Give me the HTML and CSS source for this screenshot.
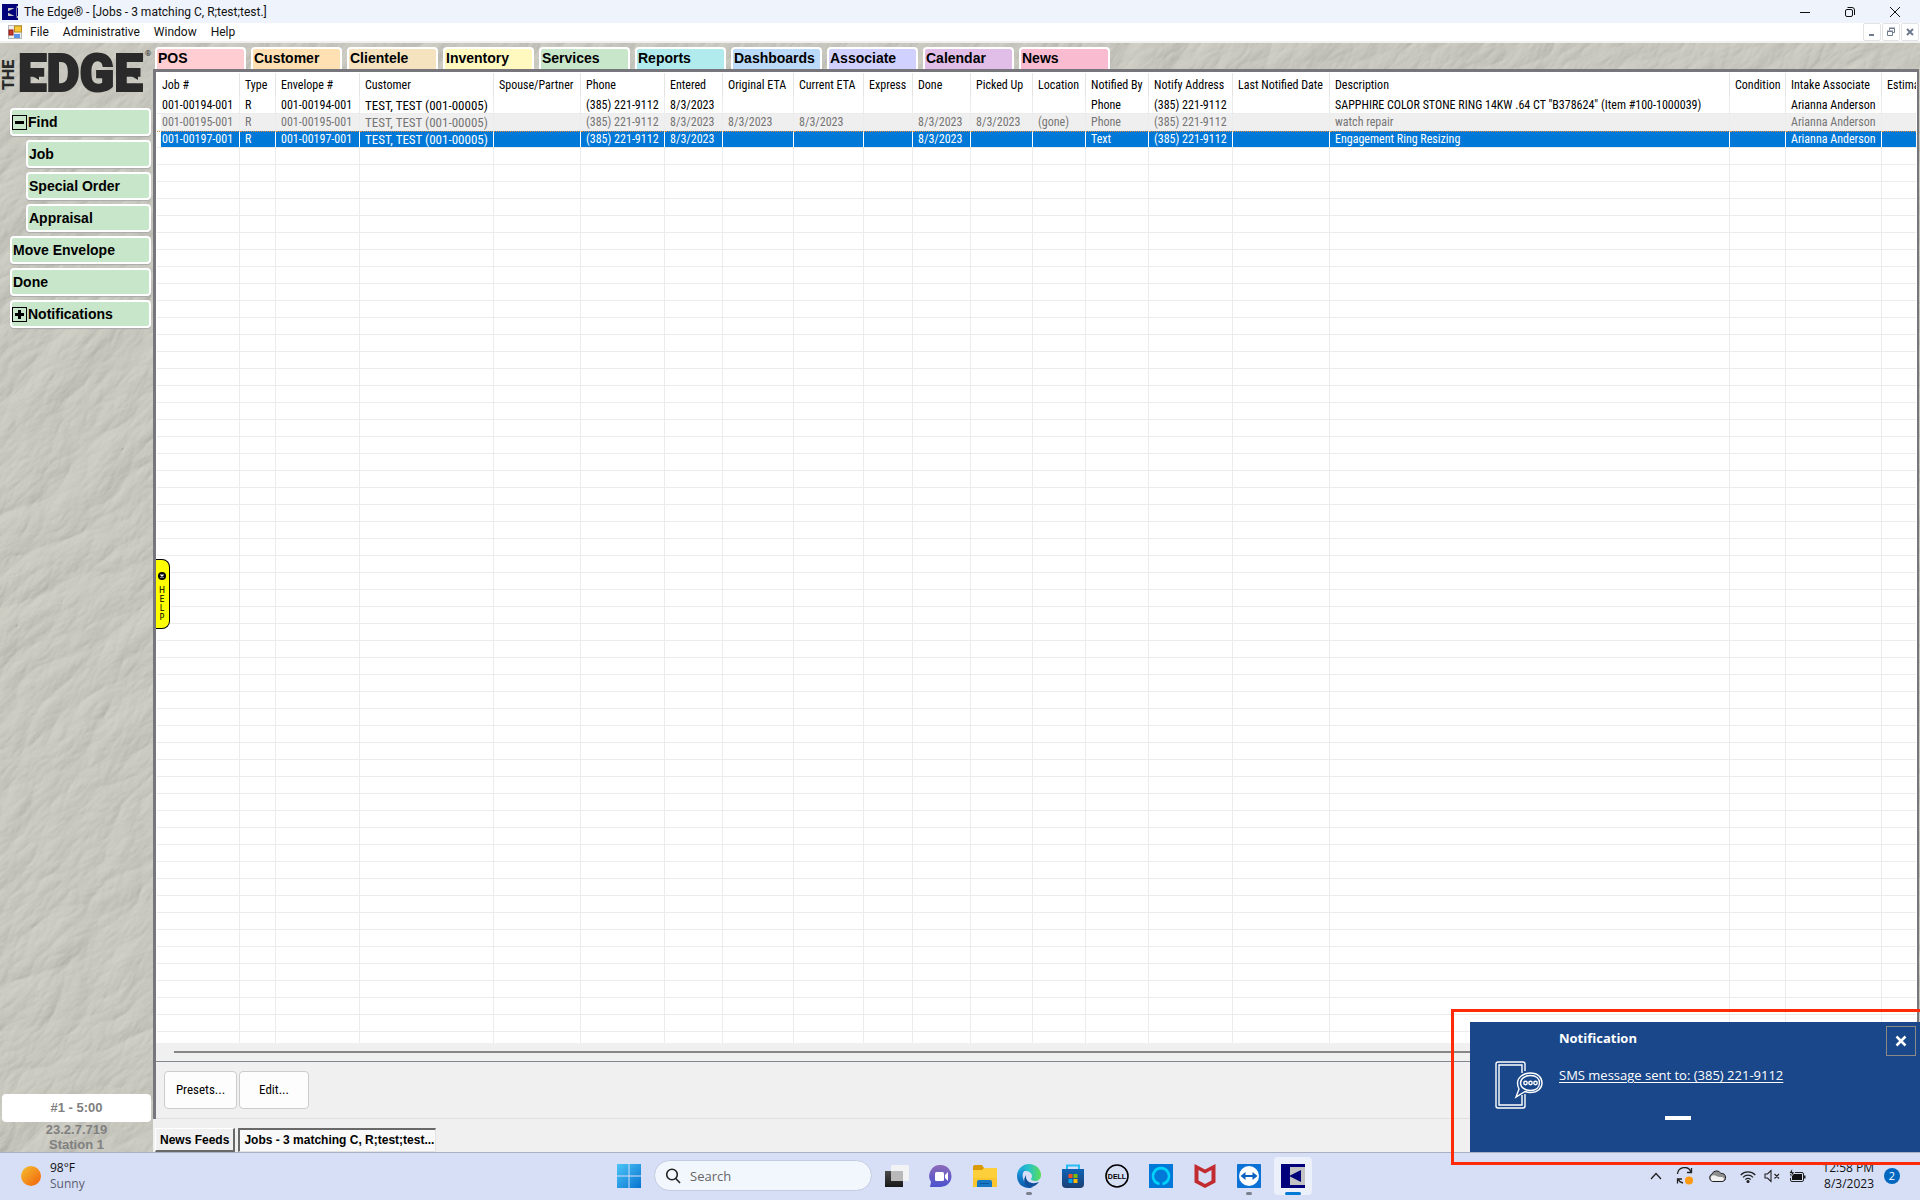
FILE: index.html
```html
<!DOCTYPE html>
<html lang="en">
<head>
<meta charset="utf-8">
<title>The Edge® - Jobs</title>
<link rel="stylesheet" href="styles.css">
</head>
<body>
<header class="titlebar">
  <svg class="app-icon" width="16" height="16" viewBox="0 0 24 24" aria-hidden="true"><rect width="24" height="24" fill="#00007b"/><path d="M9 3h15v3H9zM9 18h15v3H9zM9 3v18h13V3z" fill="#c3c3c3"/><path d="M7 12L21 5V19z" fill="#00007b"/></svg>
  <span class="title">The Edge® - [Jobs - 3 matching C, R;test;test.]</span>
  <div class="window-controls">
    <button aria-label="Minimize"><svg width="12" height="12" viewBox="0 0 12 12"><path d="M1 6.5h10" stroke="#111" fill="none"/></svg></button>
    <button aria-label="Restore"><svg width="12" height="12" viewBox="0 0 12 12" fill="none" stroke="#111"><rect x="1.500" y="3.500" width="7" height="7" rx="1.500"/><path d="M3.500 1.500H8a2.500 2.500 0 0 1 2.500 2.500v5"/></svg></button>
    <button aria-label="Close"><svg width="12" height="12" viewBox="0 0 12 12"><path d="M1 1l10 10M11 1L1 11" stroke="#111" fill="none"/></svg></button>
  </div>
</header>
<nav class="menubar" aria-label="Menu">
  <svg class="doc-icon" width="14" height="14" viewBox="0 0 14 14" aria-hidden="true"><rect x=".5" y=".5" width="13" height="13" fill="#eee" stroke="#b5b5b5"/><rect x="6.500" y="1" width="7" height="6" fill="#f7c83a" stroke="#b98a1c"/><rect x="1" y="5" width="4" height="5" fill="#c8372d" stroke="#8f1f18"/><rect x="6" y="9" width="6" height="4" fill="#5b93ea"/></svg>
  <button>File</button><button>Administrative</button><button>Window</button><button>Help</button>
  <div class="mdi-controls">
    <button aria-label="Minimize document"><svg width="12" height="12" viewBox="0 0 12 12"><path d="M3 9h5" stroke="#6d7b8c" stroke-width="2"/></svg></button>
    <button aria-label="Restore document"><svg width="12" height="12" viewBox="0 0 12 12" fill="none" stroke="#6d7b8c"><path d="M4.500 4V2.500h5v4H8M4 2h6"/><path d="M2.500 5.500h5v4h-5zM2 5h6"/></svg></button>
    <button aria-label="Close document"><svg width="12" height="12" viewBox="0 0 12 12"><path d="M3 3l6 6M9 3L3 9" stroke="#6d7b8c" stroke-width="2"/></svg></button>
  </div>
</nav>
<div class="workspace">
  <aside class="sidebar">
    <svg class="logo" width="153" height="65" viewBox="0 0 153 65" role="img" aria-label="The Edge">
      <text class="logo-the" transform="rotate(-90)" x="-47" y="14">THE</text>
      <text class="logo-edge" x="18" y="48">EDGE</text>
      <path d="M29 31l10-6v12zM128 31l10-6v12z" fill="#2a2a2a"/>
      <text class="logo-reg" x="145" y="13">®</text>
    </svg>
    <nav class="side-nav" aria-label="Services">
      <button class="side-btn"><svg width="15" height="15" viewBox="0 0 15 15"><rect x=".5" y=".5" width="14" height="14" fill="none" stroke="#000"/><path d="M3 7.500h9" stroke="#000" stroke-width="3"/></svg>Find</button>
      <button class="side-btn sub">Job</button>
      <button class="side-btn sub">Special Order</button>
      <button class="side-btn sub">Appraisal</button>
      <button class="side-btn">Move Envelope</button>
      <button class="side-btn">Done</button>
      <button class="side-btn"><svg width="15" height="15" viewBox="0 0 15 15"><rect x=".5" y=".5" width="14" height="14" fill="none" stroke="#000"/><path d="M3 7.500h9M7.500 3v9" stroke="#000" stroke-width="3"/></svg>Notifications</button>
    </nav>
    <div class="station"><div class="timer">#1 - 5:00</div><div>23.2.7.719</div><div>Station 1</div></div>
  </aside>
  <main class="main">
    <nav class="tabs" aria-label="Modules">
      <button class="tab pos">POS</button><button class="tab customer">Customer</button><button class="tab clientele">Clientele</button><button class="tab inventory">Inventory</button><button class="tab services">Services</button><button class="tab reports">Reports</button><button class="tab dashboards">Dashboards</button><button class="tab associate">Associate</button><button class="tab calendar">Calendar</button><button class="tab news">News</button>
    </nav>
    <section class="panel">
      <div class="grid">
        <table class="jobs">
          <colgroup><col class="c-job"><col class="c-type"><col class="c-env"><col class="c-cust"><col class="c-spouse"><col class="c-phone"><col class="c-entered"><col class="c-orig"><col class="c-cur"><col class="c-express"><col class="c-done"><col class="c-picked"><col class="c-loc"><col class="c-notby"><col class="c-notaddr"><col class="c-last"><col class="c-desc"><col class="c-cond"><col class="c-intake"><col></colgroup>
          <thead><tr><th>Job #</th><th>Type</th><th>Envelope #</th><th>Customer</th><th>Spouse/Partner</th><th>Phone</th><th>Entered</th><th>Original ETA</th><th>Current ETA</th><th>Express</th><th>Done</th><th>Picked Up</th><th>Location</th><th>Notified By</th><th>Notify Address</th><th>Last Notified Date</th><th>Description</th><th>Condition</th><th>Intake Associate</th><th>Estimate</th></tr></thead>
          <tbody>
            <tr><td>001-00194-001</td><td>R</td><td>001-00194-001</td><td class="caps">TEST, TEST (001-00005)</td><td></td><td>(385) 221-9112</td><td>8/3/2023</td><td></td><td></td><td></td><td></td><td></td><td></td><td>Phone</td><td>(385) 221-9112</td><td></td><td>SAPPHIRE COLOR STONE RING 14KW .64 CT "B378624" (Item #100-1000039)</td><td></td><td>Arianna Anderson</td><td></td></tr>
            <tr class="gone"><td>001-00195-001</td><td>R</td><td>001-00195-001</td><td class="caps">TEST, TEST (001-00005)</td><td></td><td>(385) 221-9112</td><td>8/3/2023</td><td>8/3/2023</td><td>8/3/2023</td><td></td><td>8/3/2023</td><td>8/3/2023</td><td>(gone)</td><td>Phone</td><td>(385) 221-9112</td><td></td><td>watch repair</td><td></td><td>Arianna Anderson</td><td></td></tr>
            <tr class="selected"><td>001-00197-001</td><td>R</td><td>001-00197-001</td><td class="caps">TEST, TEST (001-00005)</td><td></td><td>(385) 221-9112</td><td>8/3/2023</td><td></td><td></td><td></td><td>8/3/2023</td><td></td><td></td><td>Text</td><td>(385) 221-9112</td><td></td><td>Engagement Ring Resizing</td><td></td><td>Arianna Anderson</td><td></td></tr>
            <tr class="filler"><td></td><td></td><td></td><td></td><td></td><td></td><td></td><td></td><td></td><td></td><td></td><td></td><td></td><td></td><td></td><td></td><td></td><td></td><td></td><td></td></tr>
          </tbody>
        </table>
        <button class="help-tab"><svg width="8" height="8" viewBox="0 0 8 8"><circle cx="4" cy="4" r="4"/><path d="M2.500 2.500l3 3M5.500 2.500l-3 3" stroke="#fff" stroke-width="1.200"/></svg><span>H</span><span>E</span><span>L</span><span>P</span></button>
      </div>
      <div class="scrollbar"><div class="scroll-thumb"></div></div>
      <div class="actions"><button class="presets">Presets...</button><button class="edit">Edit...</button></div>
    </section>
    <div class="doc-tabs"><button class="doc-tab">News Feeds</button><button class="doc-tab active">Jobs - 3 matching C, R;test;test...</button></div>
  </main>
</div>
<footer class="taskbar">
  <button class="weather"><svg width="20" height="20" viewBox="0 0 20 20"><defs><linearGradient id="sun" x1="0" y1="0" x2="1" y2="1"><stop offset="0" stop-color="#f5c02e"/><stop offset="1" stop-color="#f2600c"/></linearGradient></defs><circle cx="10" cy="10" r="10" fill="url(#sun)"/></svg><span class="weather-text"><span>98°F</span><span class="muted">Sunny</span></span></button>
  <div class="dock">
    <button class="slot" aria-label="Start"><svg width="24" height="24" viewBox="0 0 24 24"><defs><linearGradient id="win" x1="0" y1="0" x2="1" y2="1"><stop offset="0" stop-color="#4cc5f8"/><stop offset="1" stop-color="#0873cf"/></linearGradient></defs><path d="M0 0h11.500v11.500H0zM12.500 0H24v11.500H12.500zM0 12.500h11.500V24H0zM12.500 12.500H24V24H12.500z" fill="url(#win)"/></svg></button>
    <label class="search"><svg width="16" height="16" viewBox="0 0 16 16" fill="none" stroke="#222" stroke-width="1.600"><circle cx="7" cy="6.500" r="5.300"/><path d="M10.800 10.500L15 15"/></svg><input type="text" placeholder="Search" aria-label="Search"></label>
    <button class="slot" aria-label="Task view"><svg width="24" height="24" viewBox="0 0 24 24"><defs><linearGradient id="tv1" x2="0" y2="1"><stop offset="0" stop-color="#4a4a4a"/><stop offset="1" stop-color="#181818"/></linearGradient></defs><path d="M0 7h18v16H0z" fill="url(#tv1)"/><path d="M6 1h18v16H6z" fill="#f5f5f5" opacity=".9"/><path d="M6 7h12v10H6z" fill="#b9b9b9"/></svg></button>
    <button class="slot" aria-label="Chat"><svg width="24" height="24" viewBox="0 0 24 24"><defs><linearGradient id="ch" x2="0" y2="1"><stop offset="0" stop-color="#8d6bb8"/><stop offset="1" stop-color="#4a52cf"/></linearGradient></defs><path d="M12 1a11 11 0 1 1-1 22H1l1-5A11 11 0 0 1 12 1z" fill="url(#ch)"/><rect x="6" y="8" width="9" height="9" rx="1.500" fill="#fff"/><path d="M16 11l3-3v9l-3-3z" fill="#fff"/></svg></button>
    <button class="slot" aria-label="File Explorer"><svg width="24" height="24" viewBox="0 0 24 24"><path d="M0 3a2 2 0 0 1 2-2h7l2 3v5H0z" fill="#d99a06"/><path d="M0 6h9l2-2h13v19H0z" fill="#fdd03b"/><path d="M0 14h24v9H0z" fill="#fbc52e"/><path d="M4 23v-5a2 2 0 0 1 2-2h11a2 2 0 0 1 2 2v5z" fill="#1778c4"/><path d="M7 19.500h9" stroke="#0d579d"/></svg></button>
    <button class="slot running" aria-label="Edge browser"><svg width="24" height="24" viewBox="0 0 24 24"><defs><linearGradient id="e1" x1="0" x2="1"><stop offset="0" stop-color="#1aa0e0"/><stop offset=".5" stop-color="#29c3c6"/><stop offset="1" stop-color="#5bdd55"/></linearGradient><linearGradient id="e2" x2="0" y2="1"><stop offset="0" stop-color="#1c9be0"/><stop offset="1" stop-color="#0b55a8"/></linearGradient></defs><path d="M0 11C1 4 6 0 12 0c7 0 12 5 12 11 0 4-3 6-6 6-2 0-4-1-4-2s1-1 1-3c0-3-3-5-7-5-4 0-7 2-8 4z" fill="url(#e1)"/><path d="M0 11c1-4 5-6 9-5-3 1-4 4-3 8 1 5 5 8 10 9-2 1-3 1-4 1C5 24 0 19 0 12z" fill="url(#e2)"/><path d="M9 11c-1 7 6 10 13 7-2 3-6 5-9 5-5-1-8-6-4-12z" fill="#0f4f9c"/></svg></button>
    <button class="slot" aria-label="Microsoft Store"><svg width="24" height="24" viewBox="0 0 24 24"><defs><linearGradient id="st" x2="0" y2="1"><stop offset="0" stop-color="#0f63b5"/><stop offset="1" stop-color="#1b3f73"/></linearGradient></defs><path d="M6 6V1.500h12V6" fill="none" stroke="#27bdf3" stroke-width="2"/><path d="M1 5h22v15a4 4 0 0 1-4 4H5a4 4 0 0 1-4-4z" fill="url(#st)"/><path d="M7.500 10h4v4h-4z" fill="#f05123"/><path d="M12.500 10h4v4h-4z" fill="#7fba00"/><path d="M7.500 15h4v4h-4z" fill="#00a4ef"/><path d="M12.500 15h4v4h-4z" fill="#ffb900"/></svg></button>
    <button class="slot" aria-label="Dell"><svg width="24" height="24" viewBox="0 0 24 24"><circle cx="12" cy="12" r="11" fill="none" stroke="#000" stroke-width="1.600"/><text x="12" y="15" text-anchor="middle" class="dell">DELL</text></svg></button>
    <button class="slot" aria-label="Alexa"><svg width="24" height="24" viewBox="0 0 24 24"><path d="M0 0h24v24H0z" fill="#0078d7"/><path d="M10.500 20A8 8 0 1 1 13.500 20" fill="none" stroke="#00d4fb" stroke-width="2.600"/></svg></button>
    <button class="slot" aria-label="McAfee"><svg width="24" height="24" viewBox="0 0 24 24"><path d="M1.500 0L12 5.500 22.500 0v18.500L12 24 1.500 18.500zM5.500 6v10.500L12 20l6.500-3.500V6L12 9.500z" fill="#c22c30" fill-rule="evenodd"/></svg></button>
    <button class="slot running" aria-label="TeamViewer"><svg width="24" height="24" viewBox="0 0 24 24"><rect width="24" height="24" rx="1" fill="#0d72d6"/><circle cx="12" cy="12" r="10" fill="#fff"/><path d="M3.500 12l5-4v3h7V8l5 4-5 4v-3h-7v3z" fill="#0b62c0"/></svg></button>
    <button class="slot current" aria-label="The Edge"><svg width="24" height="24" viewBox="0 0 24 24"><rect width="24" height="24" fill="#00007b"/><path d="M9 3h15v18H9z" fill="#c3c3c3"/><path d="M8 12L20 6V18z" fill="#00007b"/></svg></button>
  </div>
  <div class="tray">
    <svg width="12" height="12" viewBox="0 0 12 12" fill="none" stroke="#222" stroke-width="1.300"><path d="M1 9l5-5.500L11 9"/></svg>
    <svg width="18" height="18" viewBox="0 0 18 18" fill="none" stroke="#222" stroke-width="1.300"><path d="M1.500 7A7 7 0 0 1 15 5M15.500 1v4.500H11M7 16a7 7 0 0 1-5-4M1.500 16.500V12H6"/><circle cx="13" cy="13.500" r="4" fill="#fb9a12" stroke="none"/></svg>
    <svg width="18" height="18" viewBox="0 0 18 18"><path d="M4.500 14.500a4 4 0 0 1-.5-7.500 5 5 0 0 1 9-.5 4 4 0 0 1 1 8z" fill="#8f8f8f" stroke="#222"/><path d="M4.500 14a3 3 0 0 1 0-5.500c3-1 5 2 8.500 1.500 2-.3 3 1 3 2a2.500 2.500 0 0 1-2 2z" fill="#f2f2f2"/></svg>
    <div class="tray-group">
      <svg width="16" height="16" viewBox="0 0 16 16" fill="none" stroke="#222" stroke-width="1.200"><path d="M.7 7a10.300 10.300 0 0 1 14.600 0M3 9.300a7 7 0 0 1 10 0M5.300 11.600a3.800 3.800 0 0 1 5.400 0"/><circle cx="8" cy="13.500" r="1" fill="#222"/></svg>
      <svg width="16" height="16" viewBox="0 0 16 16" fill="none" stroke="#222" stroke-width="1.100"><path d="M1 6v4h2.500L7 13.500v-11L3.500 6zM10.500 6l4.500 4.500M15 6l-4.500 4.500"/></svg>
      <svg width="18" height="16" viewBox="0 0 18 16"><rect x="2.500" y="4.500" width="13" height="9" rx="1.500" fill="none" stroke="#222"/><rect x="4" y="6" width="10" height="6" fill="#111"/><path d="M16 7.500h1.500v3H16z" fill="#222"/><path d="M4.500 0L1 5.500h2.500L2 10l5-6H4.500z" fill="#111" stroke="#dbe2f8" stroke-width=".8"/></svg>
    </div>
    <div class="clock"><span>12:58 PM</span><span>8/3/2023</span></div>
    <span class="badge">2</span>
  </div>
</footer>
<div class="highlight"></div>
<section class="toast" role="status">
  <svg class="sms" width="48" height="48" viewBox="0 0 48 48" fill="none" stroke="#fff" stroke-width="1.400"><path d="M30 10V3a2 2 0 0 0-2-2H3a2 2 0 0 0-2 2v42a2 2 0 0 0 2 2h25a2 2 0 0 0 2-2V33"/><path d="M27 12V4H4v40h23V34"/><path d="M35.500 12C43 12 47 16.500 47 22c0 5.500-4.500 9.500-11.500 9.500-2 0-4-.3-5.500-1L21 36l3-8c-1-2-1.500-4-1.500-6 0-5.500 5.500-10 13-10z"/><path d="M35.500 14.500c5.500 0 9 3 9 7.500s-3.500 7.500-9 7.500-10-3-10-7.500 4.500-7.500 10-7.500z"/><circle cx="30.500" cy="22" r="1.700"/><circle cx="35.500" cy="22" r="1.700"/><circle cx="40.500" cy="22" r="1.700"/></svg>
  <div class="toast-body"><h2>Notification</h2><a href="#sms">SMS message sent to: (385) 221-9112</a></div>
  <button class="toast-close" aria-label="Close notification"><svg width="12" height="12" viewBox="0 0 12 12"><path d="M1.500 1.500l9 9M10.500 1.500l-9 9" stroke="#fff" stroke-width="2.500"/></svg></button>
  <span class="toast-handle"></span>
</section>
</body>
</html>
```
FILE: styles.css
```css
* { box-sizing: border-box; }
html, body { height: 100%; }
body {
  margin: 0;
  display: flex;
  flex-direction: column;
  overflow: hidden;
  font: 12px/16px Roboto, "Open Sans", sans-serif;
  color: #111;
}
button { margin: 0; padding: 0; border: 0; background: none; font: inherit; color: inherit; }
svg { display: block; flex: none; }

.titlebar { display: flex; align-items: center; height: 23px; padding: 0 3px 0 2px; background: #eff3fb; }
.title { margin-left: 6px; }
.window-controls { display: flex; margin-left: auto; }
.window-controls button { width: 45px; height: 16px; display: flex; justify-content: center; align-items: center; }

.menubar { display: flex; align-items: center; height: 20px; padding: 0 1px 0 8px; background: #fff; border-bottom: 2px solid #f0f0f0; }
.doc-icon { margin-right: 8px; }
.menubar > button { margin-right: 14px; }
.mdi-controls { display: flex; gap: 1px; margin-left: auto; }
.mdi-controls button { width: 18px; height: 18px; display: flex; align-items: center; justify-content: center; border: 1px solid #e3e3e3; border-radius: 2px; }

.workspace {
  flex: 1;
  min-height: 0;
  display: flex;
  background-color: #c6c6bd;
  background-image: url("data:image/svg+xml,%3Csvg xmlns='http://www.w3.org/2000/svg' width='1920' height='1200'%3E%3Cfilter id='s' x='0' y='0' width='1' height='1' color-interpolation-filters='sRGB'%3E%3CfeTurbulence type='turbulence' baseFrequency='.01 .02' numOctaves='5' seed='8'/%3E%3CfeColorMatrix values='0 0 0 0 0 0 0 0 0 0 0 0 0 0 0 1 0 0 0 0'/%3E%3CfeDiffuseLighting surfaceScale='2' diffuseConstant='1' lighting-color='rgb(219,219,210)'%3E%3CfeDistantLight azimuth='270' elevation='66'/%3E%3C/feDiffuseLighting%3E%3C/filter%3E%3Cg transform='rotate(-45)' opacity='.6'%3E%3Crect x='-900' y='-100' width='2400' height='2400' filter='url(%23s)'/%3E%3C/g%3E%3C/svg%3E");
}
.sidebar { width: 153px; flex: none; display: flex; flex-direction: column; }
.logo-the { font: 900 16px Roboto, sans-serif; fill: #2a2a2a; }
.logo-edge { font: 900 51px Roboto, sans-serif; fill: #2a2a2a; stroke: #2a2a2a; stroke-width: 2px; }
.logo-reg { font: 8px Roboto, sans-serif; fill: #2a2a2a; }
.side-nav { display: flex; flex-direction: column; gap: 4px; padding: 0 2px 0 10px; }
.side-btn {
  display: flex;
  align-items: center;
  gap: 1px;
  height: 28px;
  padding: 0 1px;
  background: #c8e6c9;
  border: 2px solid #fff;
  border-radius: 4px;
  box-shadow: 0 1px 1px #aaa;
  font: bold 14px/16px "Liberation Sans", Arial, sans-serif;
  color: #000;
}
.side-btn > svg { margin-left: -1px; }
.side-btn.sub { margin-left: 16px; }
.station { margin-top: auto; padding: 0 2px; text-align: center; color: #808080; font: bold 13px/15px "Liberation Sans", Arial, sans-serif; }
.timer { height: 28px; line-height: 28px; background: #fff; border-radius: 4px; }

.main { flex: 1; min-width: 0; display: flex; flex-direction: column; }
.tabs { display: flex; gap: 5px; padding: 4px 0 0 2px; }
.tab {
  width: 91px;
  height: 22px;
  padding: 0 0 2px 1px;
  text-align: left;
  border: 2px solid #fff;
  border-bottom: 0;
  border-radius: 4px 4px 0 0;
  font: bold 14px/18px "Liberation Sans", Arial, sans-serif;
  color: #000;
}
.pos { background: #ffcdd2; }
.customer { background: #ffe0b2; }
.clientele { background: #f5e3c0; }
.inventory { background: #fff9c0; }
.services { background: #c8e6c9; }
.reports { background: #b2ebee; }
.dashboards { background: #bbd9f8; }
.associate { background: #d1d1ff; }
.calendar { background: #e1bee7; }
.news { background: #f8bbd0; }

.panel { flex: 1; min-height: 0; display: flex; flex-direction: column; margin-right: 1px; border: solid #77767c; border-width: 3px 2px 0 3px; background: #f0f0f0; }
.grid { flex: 1; min-height: 0; position: relative; overflow: hidden; background: #fff; padding: 1px 1px 0; }
.jobs { width: 100%; height: 100%; table-layout: fixed; border-collapse: separate; border-spacing: 0; color: #000; font: 12px/15px "Roboto Condensed", "Liberation Sans", sans-serif; }
.jobs th { height: 24px; padding: 0 0 0 5px; border-right: 1px solid #e5e5e5; font-weight: normal; text-align: left; overflow: hidden; }
.jobs td { height: 17px; padding: 1px 0 0 5px; border-right: 1px solid #ececec; border-bottom: 1px solid #ececec; }
.jobs th, .jobs td { white-space: nowrap; }
.jobs .caps { font-size: 13px; }
.jobs .gone td { background: #efefef; color: #757575; }
.jobs .gone td:first-child { background: linear-gradient(90deg, #fff 4px, #efefef 4px); }
.jobs .selected td { padding-top: 0; background: #0078d7; color: #fff; border-top: 1px dotted #e08a3c; border-right-color: #fff; }
.jobs .selected td:first-child { background: linear-gradient(90deg, #fff 4px, #0078d7 4px); }
.jobs .filler td { height: auto; border-bottom: 0; background: repeating-linear-gradient(#fff 0 16px, #ececec 16px 17px); }
.jobs th:last-child, .jobs td:last-child { border-right: 0; }
.c-job { width: 83px; } .c-type { width: 36px; } .c-env { width: 84px; } .c-cust { width: 134px; }
.c-spouse { width: 87px; } .c-phone { width: 84px; } .c-entered { width: 58px; } .c-orig { width: 71px; }
.c-cur { width: 70px; } .c-express { width: 49px; } .c-done { width: 58px; } .c-picked { width: 62px; }
.c-loc { width: 53px; } .c-notby { width: 63px; } .c-notaddr { width: 84px; } .c-last { width: 97px; }
.c-desc { width: 400px; } .c-cond { width: 56px; } .c-intake { width: 96px; }

.help-tab {
  position: absolute;
  left: -1px;
  top: 487px;
  width: 15px;
  height: 70px;
  display: flex;
  flex-direction: column;
  align-items: center;
  padding-top: 12px;
  background: #ff0;
  border: 1px solid #000;
  border-left: 0;
  border-radius: 0 8px 8px 0;
  font: 8px/9px "DejaVu Sans", sans-serif;
  color: #000;
}
.help-tab svg { margin-bottom: 6px; }
.scrollbar { height: 19px; padding: 8px 0 0 18px; background: #f0f0f0; border-bottom: 1px solid #828790; }
.scroll-thumb { height: 2px; background: #868686; }
.actions { display: flex; gap: 2px; height: 57px; padding: 9px 8px; border-bottom: 1px solid #e0e0e0; }
.actions button { height: 38px; background: #fdfdfd; border: 1px solid #ccc; border-radius: 4px; font: 13px/16px "Roboto Condensed", "Liberation Sans", sans-serif; color: #000; }
.presets { width: 73px; }
.edit { width: 70px; }
.doc-tabs { display: flex; gap: 3px; padding: 9px 2px 0; background: #f0f0f0; }
.doc-tab { height: 24px; padding: 0 4px; border: solid; border-width: 1px 2px 2px 1px; border-color: #fff #696969 #696969 #fff; background: #f0f0f0; font: bold 12px/16px "Liberation Sans", Arial, sans-serif; color: #000; }
.doc-tab.active { padding: 0 1px 2px 4px; border-width: 2px 1px 1px 2px; border-color: #696969 #e3e3e3 #e3e3e3 #696969; background: #f9f9f9; }

.taskbar { height: 48px; flex: none; display: grid; grid-template-columns: 1fr auto 1fr; align-items: center; padding-bottom: 2px; background: #d6dff6; border-top: 1px solid #a9b0c2; font-family: "Open Sans", sans-serif; }
.weather { display: flex; gap: 9px; align-items: center; padding-left: 21px; justify-self: start; text-align: left; }
.weather-text { display: flex; flex-direction: column; }
.muted { color: #5b6070; }
.dock { display: flex; align-items: center; padding-left: 2px; }
.slot { position: relative; width: 44px; height: 38px; display: flex; align-items: center; justify-content: center; }
.search { display: flex; align-items: center; gap: 9px; width: 218px; height: 31px; margin: 0 3px; padding: 0 10px; background: #f2f6fd; border: 1px solid #c3cce2; border-radius: 16px; }
.search input { min-width: 0; flex: 1; border: 0; padding: 0; outline: 0; background: none; font: 13px/16px "Open Sans", sans-serif; }
.search input::placeholder { color: #666; opacity: 1; }
.running::after, .current::after { content: ""; position: absolute; bottom: 0; width: 6px; height: 3px; border-radius: 2px; background: #7c818e; }
.current::after { width: 16px; background: #0078d4; }
.current::before { content: ""; position: absolute; inset: 0 3px; border-radius: 4px; background: #ebf0fb; }
.current svg { position: relative; }
.dell { font: bold 7px "Liberation Sans", sans-serif; }
.tray { display: flex; align-items: center; justify-self: end; gap: 14px; padding-right: 20px; }
.tray-group { display: flex; gap: 8px; margin-right: 2px; }
.clock { display: flex; flex-direction: column; text-align: right; }
.badge { width: 16px; height: 16px; margin-left: -4px; border-radius: 8px; background: #0067c0; color: #fff; font-size: 11px; text-align: center; }

.highlight { position: fixed; right: -4px; bottom: 35px; width: 473px; height: 156px; border: 3px solid #ff2a08; }
.toast {
  position: fixed;
  right: 0;
  bottom: 48px;
  width: 450px;
  height: 130px;
  display: flex;
  align-items: flex-start;
  padding: 4px 4px 0 25px;
  background: #1a4789;
  color: #fff;
  font: 13px/18px "Open Sans", sans-serif;
}
.sms { margin-top: 35px; }
.toast-body { flex: 1; padding: 3px 0 0 16px; }
.toast h2 { margin: 0 0 19px; font: bold 13px/18px "Open Sans", sans-serif; }
.toast a { color: #fff; text-underline-offset: 2px; }
.toast-close { width: 30px; height: 30px; display: flex; align-items: center; justify-content: center; border: 1px solid #8c8a86; }
.toast-handle { position: absolute; left: 195px; bottom: 32px; width: 26px; height: 4px; background: #fff; }
```
